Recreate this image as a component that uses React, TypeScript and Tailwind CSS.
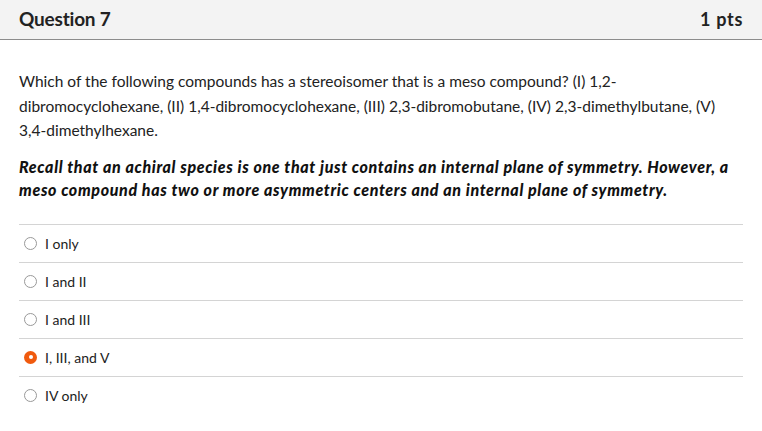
import React from "react";

const options = ["I only", "I and II", "I and III", "I, III, and V", "IV only"];

export default function App() {
  return (
    <div className="w-[762px] h-[431px] bg-white text-[#2d3b45] overflow-hidden" style={{ fontFamily: "Lato, 'Noto Sans', sans-serif" }}>
      <div className="h-[40px] bg-[#f3f3f3] border-b border-[#8c8c8c] flex items-center justify-between pl-[19px] pr-[19px]">
        <div className="text-[19px] font-bold text-[#222] tracking-[-0.2px]">Question 7</div>
        <div className="text-[18px] font-bold text-[#222] tracking-[0.7px]">1 pts</div>
      </div>
      <div className="px-[19px] pt-[29px]">
        <p className="text-[15.5px] leading-[24.5px] text-[#222]">
          Which of the following compounds has a stereoisomer that is a meso compound? (I) 1,2-dibromocyclohexane, (II) 1,4-dibromocyclohexane, (III) 2,3-dibromobutane, (IV) 2,3-dimethylbutane, (V) 3,4-dimethylhexane.
        </p>
        <p className="mt-[12px] text-[16px] leading-[23px] font-black italic text-[#111] tracking-[0.65px] pr-[6px]">
          Recall that an achiral species is one that just contains an internal plane of symmetry. However, a meso compound has two or more asymmetric centers and an internal plane of symmetry.
        </p>
        <div className="mt-[23px]">
          {options.map((o, i) => (
            <div key={o} className="h-[38px] border-t border-[#d4d4d4] flex items-center gap-[8px] pl-[5px]">
              {i === 3 ? (
                <span className="w-[13px] h-[13px] rounded-full bg-[#f05a0e] flex items-center justify-center">
                  <span className="w-[4px] h-[4px] rounded-full bg-white" />
                </span>
              ) : (
                <span className="w-[13px] h-[13px] rounded-full border border-[#999] bg-white" />
              )}
              <span className="text-[14px] text-[#222]">{o}</span>
            </div>
          ))}
        </div>
      </div>
    </div>
  );
}
